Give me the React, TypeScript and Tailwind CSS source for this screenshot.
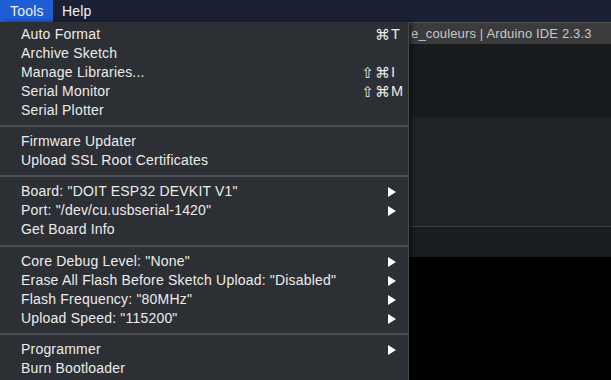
import React from "react";

type Item =
  | { kind: "item"; label: string; mods?: string; keyChar?: string; sub?: boolean }
  | { kind: "sep"; h: string };

const items: Item[] = [
  { kind: "item", label: "Auto Format", mods: "⌘", keyChar: "T" },
  { kind: "item", label: "Archive Sketch" },
  { kind: "item", label: "Manage Libraries...", mods: "⇧⌘", keyChar: "I" },
  { kind: "item", label: "Serial Monitor", mods: "⇧⌘", keyChar: "M" },
  { kind: "item", label: "Serial Plotter" },
  { kind: "sep", h: "h-[12px]" },
  { kind: "item", label: "Firmware Updater" },
  { kind: "item", label: "Upload SSL Root Certificates" },
  { kind: "sep", h: "h-[12px]" },
  { kind: "item", label: 'Board: "DOIT ESP32 DEVKIT V1"', sub: true },
  { kind: "item", label: 'Port: "/dev/cu.usbserial-1420"', sub: true },
  { kind: "item", label: "Get Board Info" },
  { kind: "sep", h: "h-[13px]" },
  { kind: "item", label: 'Core Debug Level: "None"', sub: true },
  { kind: "item", label: 'Erase All Flash Before Sketch Upload: "Disabled"', sub: true },
  { kind: "item", label: 'Flash Frequency: "80MHz"', sub: true },
  { kind: "item", label: 'Upload Speed: "115200"', sub: true },
  { kind: "sep", h: "h-[12px]" },
  { kind: "item", label: "Programmer", sub: true },
  { kind: "item", label: "Burn Bootloader" },
];

// little white submenu triangle
const Arrow = () => (
  <svg width="8" height="10" viewBox="0 0 8 10" className="mr-[12px] shrink-0">
    <polygon points="0,0 8,5 0,10" fill="#ffffff" />
  </svg>
);

const MenuRow = ({ item }: { item: Extract<Item, { kind: "item" }> }) => (
  <div className="flex h-[19px] items-center pl-[21px] text-[14px] leading-[19px] tracking-[0.2px] text-[#ececec]">
    <span className="flex-1 whitespace-nowrap">{item.label}</span>
    {item.mods && (
      <>
        <span className="text-right text-[15px] whitespace-nowrap tracking-[1px]">{item.mods}</span>
        <span className="w-[17px] text-[14.5px]">{item.keyChar}</span>
      </>
    )}
    {item.sub && <Arrow />}
  </div>
);

export default function App() {
  return (
    <div className="flex h-[380px] w-[611px] flex-col overflow-hidden bg-black font-['Liberation_Sans',_'DejaVu_Sans',_sans-serif]">
      {/* macOS menu bar */}
      <div className="flex h-[22px] items-center bg-[#1b2034] text-[14px] text-[#f0f0f0]">
        <div className="flex h-full w-[53px] items-center bg-[#1f5dd5] pl-[10px] tracking-[0.2px]">Tools</div>
        <div className="pl-[9px] tracking-[0.2px]">Help</div>
      </div>

      <div className="flex flex-1">
        {/* Tools dropdown */}
        <div className="z-10 w-[409px] shrink-0 border-r border-[#47494d] bg-[#2c2f34] pt-[3px] shadow-[3px_0_4px_rgba(0,0,0,0.45)]">
          {items.map((it, i) =>
            it.kind === "sep" ? (
              <div key={i} className={`flex items-center ${it.h}`}>
                <div className="h-[2px] w-full bg-[#4b4e53]" />
              </div>
            ) : (
              <MenuRow key={i} item={it} />
            )
          )}
        </div>

        {/* IDE window behind the menu */}
        <div className="flex flex-1 flex-col">
          <div className="flex h-[22px] items-center whitespace-nowrap border-t border-[#505050] bg-[#3b3b3c] pl-[2px] text-[13px] tracking-[0.15px] text-[#c9c9c9]">
            e_couleurs | Arduino IDE 2.3.3
          </div>
          <div className="h-[73px] bg-[#181b1e]" />
          <div className="h-[110px] border-b border-[#3a3e42] bg-[#1e2326]" />
          <div className="h-[30px] bg-[#1a1d20]" />
          <div className="flex-1 bg-black" />
        </div>
      </div>
    </div>
  );
}
